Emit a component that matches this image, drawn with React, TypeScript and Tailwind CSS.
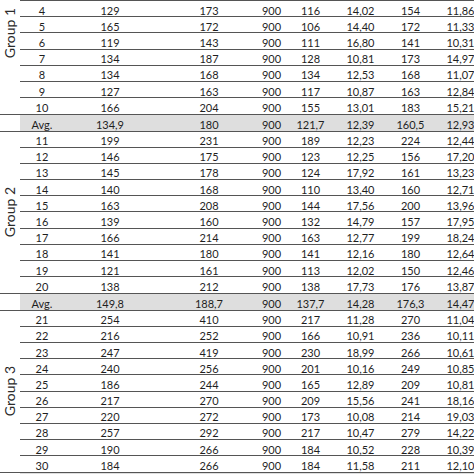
type Cell = string | number

const cols = "grid grid-cols-[4.5px_35px_101px_97px_28px_50px_50px_50px_50px]"

const groups: { label: string; shift: string; topLine: boolean; rows: Cell[][]; avg: Cell[] }[] = [
  {
    label: "Group 1",
    shift: "mb-[48px]",
    topLine: true,
    rows: [
      [4, 129, 173, 900, 116, "14,02", 154, "11,86"],
      [5, 165, 172, 900, 106, "14,40", 172, "11,33"],
      [6, 119, 143, 900, 111, "16,80", 141, "10,31"],
      [7, 134, 187, 900, 128, "10,81", 173, "14,97"],
      [8, 134, 168, 900, 134, "12,53", 168, "11,07"],
      [9, 127, 163, 900, 117, "10,87", 163, "12,84"],
      [10, 166, 204, 900, 155, "13,01", 183, "15,21"],
    ],
    avg: ["Avg.", "134,9", "180", 900, "121,7", "12,39", "160,5", "12,93"],
  },
  {
    label: "Group 2",
    shift: "",
    topLine: false,
    rows: [
      [11, 199, 231, 900, 189, "12,23", 224, "12,44"],
      [12, 146, 175, 900, 123, "12,25", 156, "17,20"],
      [13, 145, 178, 900, 124, "17,92", 161, "13,23"],
      [14, 140, 168, 900, 110, "13,40", 160, "12,71"],
      [15, 163, 208, 900, 144, "17,56", 200, "13,96"],
      [16, 139, 160, 900, 132, "14,79", 157, "17,95"],
      [17, 166, 214, 900, 163, "12,77", 199, "18,24"],
      [18, 141, 180, 900, 141, "12,16", 180, "12,64"],
      [19, 121, 161, 900, 113, "12,02", 150, "12,46"],
      [20, 138, 212, 900, 138, "17,73", 176, "13,87"],
    ],
    avg: ["Avg.", "149,8", "188,7", 900, "137,7", "14,28", "176,3", "14,47"],
  },
  {
    label: "Group 3",
    shift: "",
    topLine: false,
    rows: [
      [21, 254, 410, 900, 217, "11,28", 270, "11,04"],
      [22, 216, 252, 900, 166, "10,91", 236, "10,11"],
      [23, 247, 419, 900, 230, "18,99", 266, "10,61"],
      [24, 240, 256, 900, 201, "10,16", 249, "10,85"],
      [25, 186, 244, 900, 165, "12,89", 209, "10,81"],
      [26, 217, 270, 900, 209, "15,56", 241, "18,16"],
      [27, 220, 272, 900, 173, "10,08", 214, "19,03"],
      [28, 257, 292, 900, 217, "10,47", 279, "14,22"],
      [29, 190, 266, 900, 184, "10,52", 228, "10,39"],
      [30, 184, 266, 900, 184, "11,58", 211, "12,10"],
    ],
    // row below is cut off by the frame, only its shading shows
    avg: [],
  },
]

function Cells({ values }: { values: Cell[] }) {
  return (
    <>
      <div />
      {values.map((v, i) => (
        <div key={i} className="flex items-center justify-center pt-[3px] whitespace-nowrap">
          {v}
        </div>
      ))}
    </>
  )
}

export default function App() {
  return (
    <div className="w-[474px] h-[474px] overflow-hidden bg-white text-[#1f1f1f] font-['Lato',sans-serif] text-[11px] leading-none">
      {groups.map((g) => (
        <div key={g.label}>
          <div className="flex border-b border-[#555]">
            <div className="w-[20px] shrink-0 flex items-center justify-center">
              <span className={`[writing-mode:vertical-rl] rotate-180 whitespace-nowrap text-[14px] text-[#2b2b2b] ${g.shift}`}>
                {g.label}
              </span>
            </div>
            <div className={`flex-1 min-w-0 ${g.topLine ? "border-t border-[#555]" : ""}`}>
              {g.rows.map((r, i) => (
                <div
                  key={i}
                  className={`${cols} h-[16.19px] ${i < g.rows.length - 1 ? "border-b border-[#555]" : ""}`}
                >
                  <Cells values={r} />
                </div>
              ))}
            </div>
          </div>
          <div className="flex h-[16.19px] border-b border-[#555]">
            <div className="w-[20px] shrink-0" />
            <div className={`${cols} flex-1 min-w-0 bg-[#dedede]`}>
              <Cells values={g.avg} />
            </div>
          </div>
        </div>
      ))}
    </div>
  )
}
